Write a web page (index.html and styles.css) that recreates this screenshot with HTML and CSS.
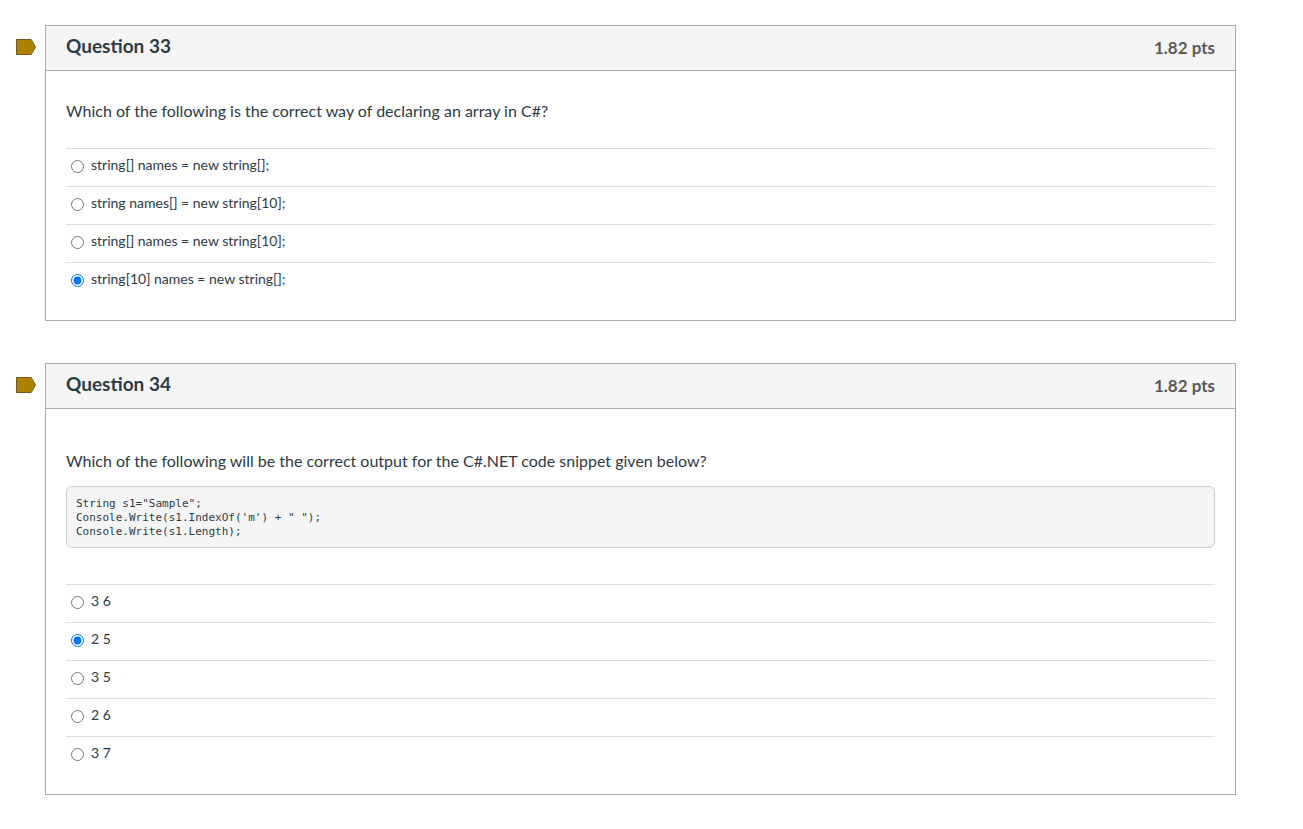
FILE: index.html
```html
<!DOCTYPE html>
<html lang="en">
<head>
    <meta charset="UTF-8">
    <meta name="viewport" content="width=device-width, initial-scale=1.0">
    <title>Quiz</title>
    <link rel="stylesheet" href="styles.css">
</head>
<body>
    <main class="questions">
        <section class="question">
            <svg class="marker" width="20" height="16" viewBox="0 0 20 16"><path d="M.5.5h14.7l4.3 7.5-4.3 7.5H.5z" fill="#ab8100" stroke="#6f5820"/></svg>
            <div class="card">
                <div class="header">
                    <h2 class="title">Question 33</h2>
                    <span class="points">1.82 pts</span>
                </div>
                <div class="text">
                    <div class="question-text">Which of the following is the correct way of declaring an array in C#?</div>
                    <div class="answers">
                        <label class="answer"><input type="radio" name="q33"> string[] names = new string[];</label>
                        <label class="answer"><input type="radio" name="q33"> string names[] = new string[10];</label>
                        <label class="answer"><input type="radio" name="q33"> string[] names = new string[10];</label>
                        <label class="answer"><input type="radio" name="q33" checked> string[10] names = new string[];</label>
                    </div>
                </div>
            </div>
        </section>

        <section class="question">
            <svg class="marker" width="20" height="16" viewBox="0 0 20 16"><path d="M.5.5h14.7l4.3 7.5-4.3 7.5H.5z" fill="#ab8100" stroke="#6f5820"/></svg>
            <div class="card">
                <div class="header">
                    <h2 class="title">Question 34</h2>
                    <span class="points">1.82 pts</span>
                </div>
                <div class="text">
                    <div class="question-text">
                        <p>Which of the following will be the correct output for the C#.NET code snippet given below?</p>
                        <pre>String s1="Sample";
Console.Write(s1.IndexOf('m') + " ");
Console.Write(s1.Length);</pre>
                    </div>
                    <div class="answers">
                        <label class="answer"><input type="radio" name="q34"> 3 6</label>
                        <label class="answer"><input type="radio" name="q34" checked> 2 5</label>
                        <label class="answer"><input type="radio" name="q34"> 3 5</label>
                        <label class="answer"><input type="radio" name="q34"> 2 6</label>
                        <label class="answer"><input type="radio" name="q34"> 3 7</label>
                    </div>
                </div>
            </div>
        </section>
    </main>
</body>
</html>
```
FILE: styles.css
```css
body {
    margin: 0;
    font-family: Lato, "Liberation Sans", sans-serif;
    font-size: 16px;
    line-height: 24px;
    color: #2d3b45;
    background: #fff;
}
.questions {
    display: flex;
    flex-direction: column;
    gap: 42px;
    padding: 25px 67px 34px 16px;
}
.question {
    display: flex;
    align-items: flex-start;
    gap: 9px;
}
.marker {
    flex: none;
    margin-top: 14px;
}
.card {
    flex: 1;
    border: 1px solid #aaa;
}
.header {
    display: flex;
    justify-content: space-between;
    padding: 8px 20px 12px;
    background: #f5f5f5;
    border-bottom: 1px solid #aaa;
}
.title {
    margin: 0;
    font-size: 19px;
    font-weight: bold;
}
.points {
    padding-top: 2px;
    margin-bottom: -2px;
    font-size: 17px;
    font-weight: bold;
    color: #595959;
}
.text {
    padding: 28px 20px 20px;
}
.question-text {
    display: flow-root;
    margin-bottom: 25px;
}
.question-text p {
    margin: 12px 0;
}
pre {
    margin: 13px 0 11px;
    padding: 10px 9px 8px;
    font-family: "DejaVu Sans Mono", monospace;
    font-size: 11px;
    line-height: 14px;
    background: #f5f5f5;
    border: 1px solid #c7cdd1;
    border-radius: 6px;
}
.answer {
    display: flex;
    align-items: center;
    gap: 7px;
    padding: 6px 0 11px 5px;
    font-size: 14px;
    line-height: 20px;
    border-top: 1px solid #ddd;
}
.answer input {
    flex: none;
    width: 13px;
    height: 13px;
    margin: 2px 0 0;
}
```
